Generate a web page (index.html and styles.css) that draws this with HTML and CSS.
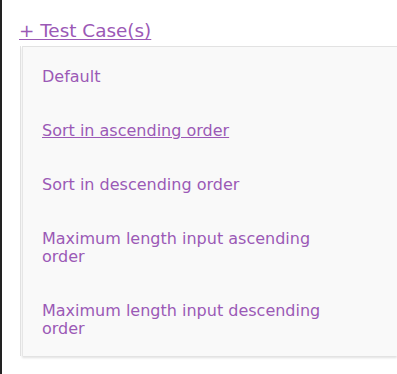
FILE: index.html
```html
<!DOCTYPE html>
<html lang="en">
<head>
    <meta charset="UTF-8">
    <title>Test Cases</title>
    <link rel="stylesheet" href="styles.css">
</head>
<body>
    <div class="panel">
        <a href="#" class="add-link">+ Test Case(s)</a>
        <div class="dropdown">
            <ul class="menu">
                <li><a href="#">Default</a></li>
                <li><a href="#" class="active">Sort in ascending order</a></li>
                <li><a href="#">Sort in descending order</a></li>
                <li><a href="#">Maximum length input ascending order</a></li>
                <li><a href="#">Maximum length input descending order</a></li>
            </ul>
        </div>
    </div>
</body>
</html>
```

FILE: styles.css
```css
* {
    margin: 0;
    padding: 0;
    box-sizing: border-box;
}

body {
    font-family: 'DejaVu Sans', sans-serif;
    background: #fff;
    border-left: 2px solid #222;
    min-height: 100vh;
}

.panel {
    padding: 20px 0 0 17px;
}

.add-link {
    display: inline-block;
    font-size: 18.4px;
    line-height: 22px;
    color: #9b59b6;
    text-decoration: underline;
    text-underline-offset: 2px;
}

.dropdown {
    margin-top: 4px;
    margin-left: 1px;
    border-left: 1px solid #e3e3e3;
    padding-left: 1px;
}

.menu {
    list-style: none;
    background: #f9f9f9;
    border-top: 1px solid #e2e2e2;
    border-left: 1px solid #e6e6e6;
    box-shadow: 0 2px 2px rgba(0, 0, 0, 0.12);
    padding: 3px 0 0 0;
}

.menu li a {
    display: block;
    width: 318px;
    padding: 18px 19px;
    font-size: 16px;
    line-height: 18px;
    color: #9b59b6;
    text-decoration: none;
}

.menu li a.active {
    text-decoration: underline;
}
```
